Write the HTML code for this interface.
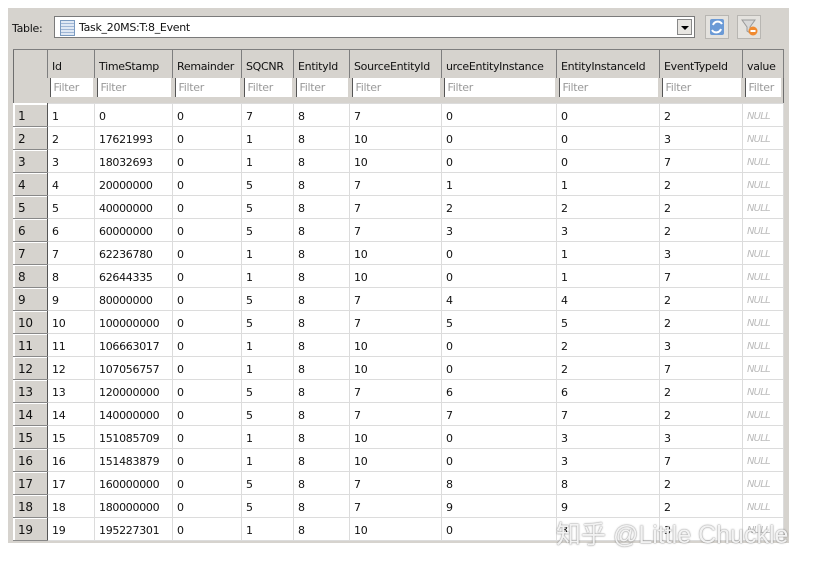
<!DOCTYPE html>
<html><head><meta charset="utf-8"><style>
body{margin:0;width:815px;height:564px;background:#fff;position:relative;overflow:hidden;font-family:"DejaVu Sans","Liberation Sans",sans-serif;font-size:11px;letter-spacing:-0.3px;color:#111}
#panel{position:absolute;left:8px;top:8px;width:781px;height:535px;background:#d6d3ce}
.lbl{position:absolute;left:12px;top:22px}
#combo{position:absolute;left:54px;top:16px;width:641px;height:22px;background:#fff;border:1px solid #7a7a7a;box-sizing:border-box}
#combo .ic{position:absolute;left:5px;top:3px;width:13px;height:14px;border:1px solid #7a9ac0;background:repeating-linear-gradient(#dfe8f4 0 2px,#9fb6d6 2px 3px)}
#combo .t{position:absolute;left:24px;top:4px}
#combo .dd{position:absolute;right:2px;top:2px;width:15px;height:16px;background:#e8e6e2;border:1px solid #888;box-sizing:border-box}
#combo .dd:after{content:"";position:absolute;left:3px;top:6px;border:4px solid transparent;border-top:4px solid #000;border-bottom:0}
.btn{position:absolute;top:15px;width:24px;height:24px;background:#e4e2de;border:1px solid #b8b6b2;box-sizing:border-box}
table{position:absolute;left:13px;top:49px;border-collapse:collapse;table-layout:fixed;background:#d6d3ce;border:1px solid #6e6e6e}
td{padding:0 0 0 4px;overflow:hidden;white-space:nowrap;box-sizing:border-box}
tr.h td{height:28px;background:#d6d3ce;border:1px solid #7e7e7e;border-bottom:none;padding-top:5px}
tr.f td{height:21px;padding:0 2px 1px 2px}
tr.f td span{display:block;background:#fff;color:#999;height:19px;line-height:19px;padding-left:3px;border-left:1px solid #555}
tr.g td{height:5px}
tr.d td{height:23px;background:#fff;border:1px solid #dcdcdc;padding-top:2px}
tr.d td.n{background:#d6d3ce;border:1px solid #fff;border-right:1px solid #555;border-bottom:1px solid #888;box-shadow:inset 1px 1px 0 #fff;font-size:12px}
tr.d td.nl{color:#bbb;font-style:italic;font-size:10px;letter-spacing:-0.8px}
#wm{position:absolute;left:556px;top:515px;color:rgba(255,255,255,.9);font-size:25px;font-family:"Liberation Sans","Noto Sans CJK SC",sans-serif;letter-spacing:0;text-shadow:0 0 1px #777,0 0 2px rgba(0,0,0,.3)}
</style></head><body>
<div id="panel"></div>
<div class="lbl">Table:</div>
<div id="combo"><div class="ic"></div><div class="t">Task_20MS:T:8_Event</div><div class="dd"></div></div>
<div class="btn" style="left:705px"><svg width="22" height="22" viewBox="0 0 22 22"><rect x="4" y="3" width="14" height="16" rx="2" fill="#6b9ad6"/><path d="M7 9a5 5 0 0 1 9-1M15 13a5 5 0 0 1-9 1" stroke="#fff" stroke-width="2" fill="none"/></svg></div>
<div class="btn" style="left:737px"><svg width="22" height="22" viewBox="0 0 22 22"><path d="M4 4h13l-5 7v6l-3-2v-4z" fill="#d8d8d8" stroke="#999"/><circle cx="15" cy="15" r="4.5" fill="#f08a30"/><rect x="12.5" y="14" width="5" height="2" fill="#fff"/></svg></div>
<table>
<colgroup><col style="width:34px"><col style="width:47px"><col style="width:78px"><col style="width:69px"><col style="width:52px"><col style="width:56px"><col style="width:92px"><col style="width:115px"><col style="width:103px"><col style="width:83px"><col style="width:41px"></colgroup>
<tr class="h"><td style="border-left:none"></td><td>Id</td><td>TimeStamp</td><td>Remainder</td><td>SQCNR</td><td>EntityId</td><td>SourceEntityId</td><td>urceEntityInstance</td><td>EntityInstanceId</td><td>EventTypeId</td><td>value</td></tr>
<tr class="f"><td></td><td><span>Filter</span></td><td><span>Filter</span></td><td><span>Filter</span></td><td><span>Filter</span></td><td><span>Filter</span></td><td><span>Filter</span></td><td><span>Filter</span></td><td><span>Filter</span></td><td><span>Filter</span></td><td><span>Filter</span></td></tr>
<tr class="g"><td colspan="11"></td></tr>
<tr class="d"><td class="n">1</td><td>1</td><td>0</td><td>0</td><td>7</td><td>8</td><td>7</td><td>0</td><td>0</td><td>2</td><td class="nl">NULL</td></tr>
<tr class="d"><td class="n">2</td><td>2</td><td>17621993</td><td>0</td><td>1</td><td>8</td><td>10</td><td>0</td><td>0</td><td>3</td><td class="nl">NULL</td></tr>
<tr class="d"><td class="n">3</td><td>3</td><td>18032693</td><td>0</td><td>1</td><td>8</td><td>10</td><td>0</td><td>0</td><td>7</td><td class="nl">NULL</td></tr>
<tr class="d"><td class="n">4</td><td>4</td><td>20000000</td><td>0</td><td>5</td><td>8</td><td>7</td><td>1</td><td>1</td><td>2</td><td class="nl">NULL</td></tr>
<tr class="d"><td class="n">5</td><td>5</td><td>40000000</td><td>0</td><td>5</td><td>8</td><td>7</td><td>2</td><td>2</td><td>2</td><td class="nl">NULL</td></tr>
<tr class="d"><td class="n">6</td><td>6</td><td>60000000</td><td>0</td><td>5</td><td>8</td><td>7</td><td>3</td><td>3</td><td>2</td><td class="nl">NULL</td></tr>
<tr class="d"><td class="n">7</td><td>7</td><td>62236780</td><td>0</td><td>1</td><td>8</td><td>10</td><td>0</td><td>1</td><td>3</td><td class="nl">NULL</td></tr>
<tr class="d"><td class="n">8</td><td>8</td><td>62644335</td><td>0</td><td>1</td><td>8</td><td>10</td><td>0</td><td>1</td><td>7</td><td class="nl">NULL</td></tr>
<tr class="d"><td class="n">9</td><td>9</td><td>80000000</td><td>0</td><td>5</td><td>8</td><td>7</td><td>4</td><td>4</td><td>2</td><td class="nl">NULL</td></tr>
<tr class="d"><td class="n">10</td><td>10</td><td>100000000</td><td>0</td><td>5</td><td>8</td><td>7</td><td>5</td><td>5</td><td>2</td><td class="nl">NULL</td></tr>
<tr class="d"><td class="n">11</td><td>11</td><td>106663017</td><td>0</td><td>1</td><td>8</td><td>10</td><td>0</td><td>2</td><td>3</td><td class="nl">NULL</td></tr>
<tr class="d"><td class="n">12</td><td>12</td><td>107056757</td><td>0</td><td>1</td><td>8</td><td>10</td><td>0</td><td>2</td><td>7</td><td class="nl">NULL</td></tr>
<tr class="d"><td class="n">13</td><td>13</td><td>120000000</td><td>0</td><td>5</td><td>8</td><td>7</td><td>6</td><td>6</td><td>2</td><td class="nl">NULL</td></tr>
<tr class="d"><td class="n">14</td><td>14</td><td>140000000</td><td>0</td><td>5</td><td>8</td><td>7</td><td>7</td><td>7</td><td>2</td><td class="nl">NULL</td></tr>
<tr class="d"><td class="n">15</td><td>15</td><td>151085709</td><td>0</td><td>1</td><td>8</td><td>10</td><td>0</td><td>3</td><td>3</td><td class="nl">NULL</td></tr>
<tr class="d"><td class="n">16</td><td>16</td><td>151483879</td><td>0</td><td>1</td><td>8</td><td>10</td><td>0</td><td>3</td><td>7</td><td class="nl">NULL</td></tr>
<tr class="d"><td class="n">17</td><td>17</td><td>160000000</td><td>0</td><td>5</td><td>8</td><td>7</td><td>8</td><td>8</td><td>2</td><td class="nl">NULL</td></tr>
<tr class="d"><td class="n">18</td><td>18</td><td>180000000</td><td>0</td><td>5</td><td>8</td><td>7</td><td>9</td><td>9</td><td>2</td><td class="nl">NULL</td></tr>
<tr class="d"><td class="n">19</td><td>19</td><td>195227301</td><td>0</td><td>1</td><td>8</td><td>10</td><td>0</td><td>3</td><td>3</td><td class="nl">NULL</td></tr>
</table>
<div id="wm">知乎 @Little Chuckle</div>
</body></html>
